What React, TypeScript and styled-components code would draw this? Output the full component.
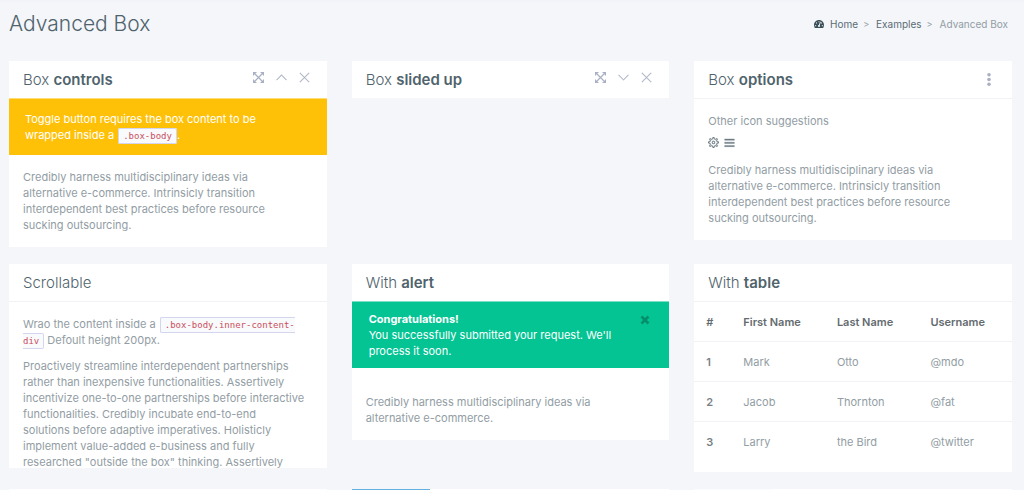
import React from 'react';
import styled, { createGlobalStyle } from 'styled-components';
import { TfiAngleUp, TfiAngleDown, TfiClose, TfiSettings, TfiMenu } from 'react-icons/tfi';
import { FaTachometerAlt } from 'react-icons/fa';

const GlobalStyle = createGlobalStyle`
  *, *::before, *::after { box-sizing: border-box; }
  body {
    margin: 0;
    background: #f4f6fa;
    color: #929da4;
    font: 400 11px/16px Inter, "Liberation Sans", sans-serif;
  }
  p, h1, h2 { margin: 0; }
`;

const Page = styled.div`
  height: 100vh;
  overflow: hidden;
  border-top: 2px solid #f1f3f8;
  padding: 0 12px 0 9px;
`;

const PageHeader = styled.header`
  display: flex;
  align-items: center;
  justify-content: space-between;
  padding: 7px 4px 22px 0;
`;

const PageTitle = styled.h1`
  color: #4f636c;
  font-size: 21px;
  line-height: 30px;
  font-weight: 300;
`;

const Crumbs = styled.ol`
  display: flex;
  margin: 0;
  padding: 0;
  list-style: none;
  font-size: 10px;
`;

const Crumb = styled.li`
  display: flex;
  align-items: center;
  & + &::before {
    content: '>';
    padding: 0 7px 0 5px;
    font-size: 9px;
  }
`;

const CrumbLink = styled.a`
  display: flex;
  align-items: center;
  gap: 6px;
  color: #5a6c75;
  text-decoration: none;
  svg { color: #3b4f58; }
`;

const Grid = styled.main`
  display: grid;
  grid-template-columns: repeat(3, minmax(0, 1fr));
  gap: 17px 25px;
  align-items: start;
`;

const Card = styled.section`
  background: #fff;
`;

const CardHeader = styled.header`
  display: flex;
  align-items: center;
  justify-content: space-between;
  height: 37px;
  padding: 0 17px 0 14px;
`;

const CardTitle = styled.h2`
  color: #4f636c;
  font-size: 15px;
  line-height: 20px;
  font-weight: 300;
  b { font-weight: 600; }
`;

const Controls = styled.div`
  display: flex;
  gap: 12px;
  padding-bottom: 4px;
`;

const IconButton = styled.button`
  display: flex;
  padding: 0;
  border: 0;
  background: none;
  color: #a9b0c3;
  font-size: 11px;
`;

const StrokedIconButton = styled(IconButton)`
  svg { stroke: currentColor; stroke-width: 0.6px; }
`;

const CardBody = styled.div<{ $divided?: boolean; $spaced?: boolean }>`
  border-top: ${p => (p.$divided ? '1px solid #f1f2f5' : '0')};
  padding: ${p => (p.$spaced ? 26 : 14)}px 14px 14px;
`;

const Text = styled.p`
  max-width: 265px;
`;

const ScrollBody = styled(CardBody)`
  height: 167px;
  overflow: hidden;
  p + p { margin-top: 10px; }
`;

const Alert = styled.div<{ $tone: 'warning' | 'success' }>`
  display: flex;
  justify-content: space-between;
  align-items: flex-start;
  color: #fff;
  background: ${p => (p.$tone === 'warning' ? '#ffc107' : '#04c494')};
  border-top: 1px solid ${p => (p.$tone === 'warning' ? '#ffdc74' : '#7fe0c8')};
  padding: ${p => (p.$tone === 'warning' ? '12px 16px' : '9px 17px')};
  b { font-weight: 700; }
`;

const DismissButton = styled.button`
  display: flex;
  padding: 4px 2px;
  border: 0;
  background: none;
  color: #038f6c;
`;

const Code = styled.code`
  margin-left: 1px;
  padding: 2px 4px;
  border: 1px solid #d3d6ee;
  border-radius: 2px;
  background: #f9fafb;
  color: #c94f60;
  font: 400 9px/9px "DejaVu Sans Mono", monospace;
`;

const Suggestions = styled.div`
  display: flex;
  gap: 5px;
  margin: 5px 0 12px;
  height: 16px;
  align-items: center;
`;

const SuggestionLink = styled.a`
  display: flex;
  color: #6b7a82;
  svg { stroke: currentColor; stroke-width: 0.5px; }
`;

const Table = styled.table`
  width: 100%;
  table-layout: fixed;
  border-collapse: collapse;
  margin-bottom: 10px;
  text-align: left;
  th, td {
    height: 40px;
    padding: 0 0 0 12px;
    border-top: 1px solid #f1f2f5;
  }
  th { font-weight: 600; color: #646b6f; }
  tbody th { color: #7a8185; }
  th:first-child { width: 37px; }
`;

const TabStub = styled.div<{ $color: string }>`
  width: 78px;
  height: 40px;
  background: ${p => p.$color};
`;

const people = [
  ['1', 'Mark', 'Otto', '@mdo'],
  ['2', 'Jacob', 'Thornton', '@fat'],
  ['3', 'Larry', 'the Bird', '@twitter'],
];

function ExpandIcon() {
  return (
    <svg width="11" height="11" viewBox="0 0 11 11" fill="currentColor" stroke="currentColor">
      <path d="M2 2l7 7M9 2l-7 7" fill="none" strokeWidth="1.2" />
      <path d="M0 0h4L0 4zM11 0v4L7 0zM0 11V7l4 4zM11 11H7l4-4z" stroke="none" />
    </svg>
  );
}

function DotsIcon() {
  return (
    <svg width="12" height="13" viewBox="0 0 12 13" fill="currentColor">
      <circle cx="6" cy="1.8" r="1.8" />
      <circle cx="6" cy="6.500" r="1.8" />
      <circle cx="6" cy="11.200" r="1.8" />
    </svg>
  );
}

function BoxControls({ collapsed }: { collapsed?: boolean }) {
  return (
    <Controls>
      <IconButton aria-label="Fullscreen"><ExpandIcon /></IconButton>
      <StrokedIconButton aria-label="Toggle">{collapsed ? <TfiAngleDown /> : <TfiAngleUp />}</StrokedIconButton>
      <StrokedIconButton aria-label="Close"><TfiClose /></StrokedIconButton>
    </Controls>
  );
}

export default function App() {
  return (
    <>
      <GlobalStyle />
      <Page>
        <PageHeader>
          <PageTitle>Advanced Box</PageTitle>
          <nav aria-label="Breadcrumb">
            <Crumbs>
              <Crumb><CrumbLink href="#"><FaTachometerAlt />Home</CrumbLink></Crumb>
              <Crumb><CrumbLink href="#">Examples</CrumbLink></Crumb>
              <Crumb aria-current="page">Advanced Box</Crumb>
            </Crumbs>
          </nav>
        </PageHeader>
        <Grid>
          <Card>
            <CardHeader>
              <CardTitle>Box <b>controls</b></CardTitle>
              <BoxControls />
            </CardHeader>
            <Alert $tone="warning">
              <Text>Toggle button requires the box content to be wrapped inside a <Code>.box-body</Code>.</Text>
            </Alert>
            <CardBody>
              <Text>Credibly harness multidisciplinary ideas via alternative e-commerce. Intrinsicly transition interdependent best practices before resource sucking outsourcing.</Text>
            </CardBody>
          </Card>
          <Card>
            <CardHeader>
              <CardTitle>Box <b>slided up</b></CardTitle>
              <BoxControls collapsed />
            </CardHeader>
          </Card>
          <Card>
            <CardHeader>
              <CardTitle>Box <b>options</b></CardTitle>
              <IconButton aria-label="More options"><DotsIcon /></IconButton>
            </CardHeader>
            <CardBody $divided>
              <p>Other icon suggestions</p>
              <Suggestions>
                <SuggestionLink href="#" aria-label="Settings"><TfiSettings /></SuggestionLink>
                <SuggestionLink href="#" aria-label="Menu"><TfiMenu /></SuggestionLink>
              </Suggestions>
              <Text>Credibly harness multidisciplinary ideas via alternative e-commerce. Intrinsicly transition interdependent best practices before resource sucking outsourcing.</Text>
            </CardBody>
          </Card>
          <Card>
            <CardHeader><CardTitle>Scrollable</CardTitle></CardHeader>
            <ScrollBody $divided>
              <p>Wrao the content inside a <Code>.box-body.inner-content-div</Code> Defoult height 200px.</p>
              <p>
                Proactively streamline interdependent partnerships rather than inexpensive functionalities. Assertively
                incentivize one-to-one partnerships before interactive functionalities. Credibly incubate end-to-end<br />
                solutions before adaptive imperatives. Holisticly<br />
                implement value-added e-business and fully<br />
                researched "outside the box" thinking. Assertively
              </p>
            </ScrollBody>
          </Card>
          <Card>
            <CardHeader><CardTitle>With <b>alert</b></CardTitle></CardHeader>
            <Alert $tone="success">
              <Text><b>Congratulations!</b><br />You successfully submitted your request. We'll process it soon.</Text>
              <DismissButton aria-label="Dismiss">
                <svg width="10" height="10" viewBox="0 0 10 10" stroke="currentColor" strokeWidth="2.600"><path d="M1.500 1.500l7 7M8.500 1.500l-7 7" /></svg>
              </DismissButton>
            </Alert>
            <CardBody $spaced>
              <Text>Credibly harness multidisciplinary ideas via alternative e-commerce.</Text>
            </CardBody>
          </Card>
          <Card>
            <CardHeader><CardTitle>With <b>table</b></CardTitle></CardHeader>
            <Table>
              <thead>
                <tr><th scope="col">#</th><th scope="col">First Name</th><th scope="col">Last Name</th><th scope="col">Username</th></tr>
              </thead>
              <tbody>
                {people.map(([id, first, last, user]) => (
                  <tr key={id}><th scope="row">{id}</th><td>{first}</td><td>{last}</td><td>{user}</td></tr>
                ))}
              </tbody>
            </Table>
          </Card>
          <Card><TabStub $color="#fff" /></Card>
          <Card><TabStub $color="#62b0de" /></Card>
          <Card><TabStub $color="#fbfcfd" /></Card>
        </Grid>
      </Page>
    </>
  );
}
